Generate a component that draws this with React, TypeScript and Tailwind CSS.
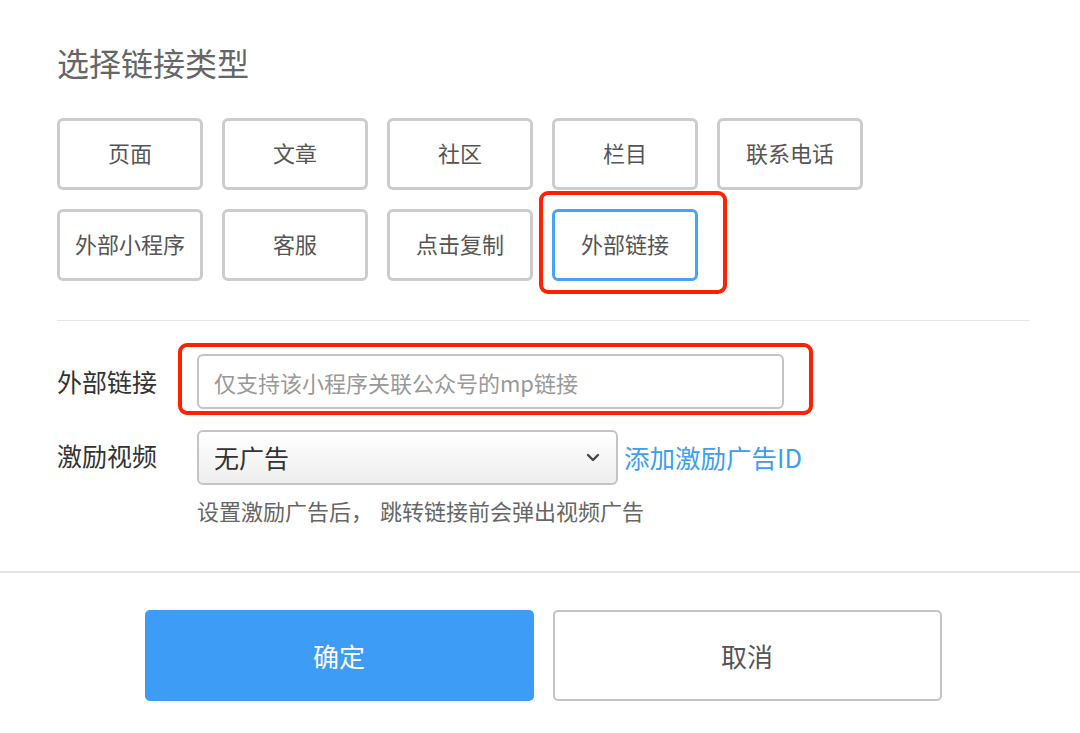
import React, { useState } from 'react';

const linkTypes = [
  '页面',
  '文章',
  '社区',
  '栏目',
  '联系电话',
  '外部小程序',
  '客服',
  '点击复制',
  '外部链接',
];

const font = { fontFamily: '"Noto Sans CJK SC", "Noto Sans", sans-serif' };

// Red annotation frame drawn over a control
const Highlight: React.FC<{ className: string }> = ({ className }) => (
  <div
    className={`pointer-events-none absolute rounded-[9px] border-[4px] border-[#ff2200] ${className}`}
  />
);

export default function App() {
  const [active, setActive] = useState('外部链接');

  return (
    <div className="min-h-[733px] w-[1080px] bg-white" style={font}>
      <div className="px-[57px] pt-[40px]">
        <h2 className="text-[32px] leading-[44px] font-normal text-[#666]">选择链接类型</h2>

        {/* Link type buttons */}
        <div className="mt-[34px] flex w-[830px] flex-wrap gap-x-[19px] gap-y-[19px]">
          {linkTypes.map((t) => {
            const isActive = active === t;
            return (
              <div key={t} className="relative">
                <button
                  onClick={() => setActive(t)}
                  className={`flex h-[72px] w-[146px] items-center justify-center rounded-[6px] border-[3px] bg-white pb-[3px] text-[22px] text-[#555] ${
                    isActive ? 'border-[#4aa3f6]' : 'border-[#cccccc]'
                  }`}
                >
                  {t}
                </button>
                {isActive && <Highlight className="-top-[18px] -bottom-[13px] -left-[13px] -right-[29px]" />}
              </div>
            );
          })}
        </div>

        <div className="mt-[39px] h-px w-[973px] bg-[#e6e6e6]" />

        {/* Form */}
        <div className="mt-[33px] flex items-center">
          <div className="w-[140px] text-[25px] text-[#333]">外部链接</div>
          <div className="relative">
            <input
              placeholder="仅支持该小程序关联公众号的mp链接"
              className="h-[55px] w-[587px] rounded-[6px] border-2 border-[#c4c4c4] px-[15px] text-[22px] text-[#333] outline-none placeholder:text-[#999]"
              style={font}
            />
            <Highlight className="-top-[11px] -bottom-[6px] -left-[19px] -right-[29px]" />
          </div>
        </div>

        <div className="mt-[21px] flex">
          <div className="w-[140px] pt-[5px] text-[25px] leading-[40px] text-[#333]">激励视频</div>
          <div className="flex flex-col">
            <div className="flex items-center">
              <div className="flex h-[55px] w-[421px] items-center justify-between rounded-[6px] border-2 border-[#c4c4c4] bg-gradient-to-b from-white to-[#eeeeee] pl-[15px] pr-[16px]">
                <span className="text-[25px] text-[#333]">无广告</span>
                <svg width="14" height="9" viewBox="0 0 14 9" fill="none">
                  <path d="M2 2l5 5 5-5" stroke="#444" strokeWidth="2.4" strokeLinecap="round" strokeLinejoin="round" />
                </svg>
              </div>
              <a className="ml-[6px] cursor-pointer text-[25.5px] text-[#3c9ef2]">添加激励广告ID</a>
            </div>
            <div className="mt-[10px] flex text-[22px] leading-[30px] text-[#666]">
              <span>设置激励广告后，</span>
              <span className="ml-[7px]">跳转链接前会弹出视频广告</span>
            </div>
          </div>
        </div>
      </div>

      <div className="mt-[46px] h-[2px] w-full bg-[#e3e3e3]" />

      {/* Footer actions */}
      <div className="flex justify-center gap-[19px] pt-[37px] pl-[6px]">
        <button className="h-[91px] w-[389px] rounded-[5px] bg-[#3d9cf5] text-[26px] text-white">确定</button>
        <button className="h-[91px] w-[389px] rounded-[5px] border-2 border-[#c4c4c4] bg-white text-[26px] text-[#555]">
          取消
        </button>
      </div>
    </div>
  );
}
